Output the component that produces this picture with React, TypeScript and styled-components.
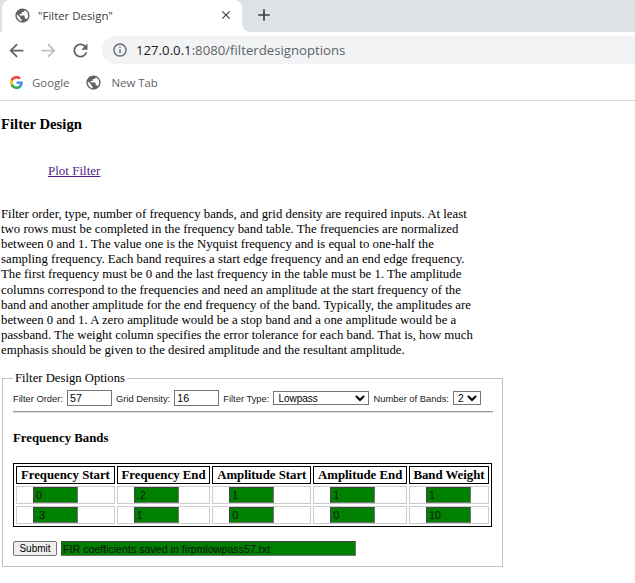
import React from 'react';
import styled, {createGlobalStyle} from 'styled-components';

const GLOBE =
  'M12 2C6.48 2 2 6.48 2 12s4.48 10 10 10 10-4.48 10-10S17.52 2 12 2zm-1 17.93c-3.95-.49-7-3.85-7-7.93 0-.62.08-1.21.21-1.79L9 15v1c0 1.1.9 2 2 2v1.93zm6.9-2.54c-.26-.81-1-1.39-1.9-1.39h-1v-3c0-.55-.45-1-1-1H8v-2h2c.55 0 1-.45 1-1V7h2c1.1 0 2-.9 2-2v-.41c2.93 1.19 5 4.06 5 7.41 0 2.08-.8 3.97-2.1 5.39z';

const GlobalStyle = createGlobalStyle`
  html, body {
    margin: 0;
    padding: 0;
    background: #fff;
  }
  body {
    width: 635px;
    height: 583px;
    overflow: hidden;
  }
`;

const TabStrip = styled.div`
  height: 32px;
  background: #dee1e6;
  display: flex;
  align-items: flex-end;
  padding-left: 2px;
`;

const Tab = styled.div`
  position: relative;
  width: 240px;
  height: 32px;
  background: #fff;
  border-radius: 8px 8px 0 0;
  display: flex;
  align-items: center;
  padding: 0 9px 2px 12px;
  box-sizing: border-box;
  font: 11.4px 'Open Sans', sans-serif;
  color: #3c4043;

  &::after {
    content: '';
    position: absolute;
    right: -8px;
    bottom: 0;
    width: 8px;
    height: 8px;
    background: radial-gradient(circle at 100% 0, transparent 7.5px, #fff 8px);
  }
`;

const TabTitle = styled.span`
  margin-left: 7px;
  flex: 1;
`;

const NewTab = styled.div`
  width: 20px;
  height: 32px;
  margin-left: 12px;
  display: flex;
  align-items: center;
  justify-content: center;
  padding-bottom: 2px;
  box-sizing: border-box;
`;

const Toolbar = styled.div`
  height: 36px;
  display: flex;
  align-items: center;
`;

const NavButton = styled.div`
  width: 16px;
  height: 16px;
  margin-left: 8px;
  margin-right: 8px;
  display: flex;
  align-items: center;
  justify-content: center;
`;

const NavGroup = styled.div`
  display: flex;
  width: 102px;
`;

const Omnibox = styled.div`
  flex: 1;
  height: 28px;
  background: #f1f3f4;
  border-radius: 14px 0 0 14px;
  display: flex;
  align-items: center;
  padding-left: 10px;
  font: 13.2px 'Open Sans', sans-serif;
  color: #5f6368;
`;

const Host = styled.span`
  color: #202124;
`;

const Url = styled.span`
  margin-left: 8px;
`;

const BookmarkBar = styled.div`
  height: 33px;
  box-sizing: border-box;
  border-bottom: 1px solid #dadce0;
  display: flex;
  align-items: center;
  padding: 0 0 4px 10px;
  gap: 16px;
  font: 11.4px 'Open Sans', sans-serif;
  color: #5f6368;
`;

const Bookmark = styled.div`
  display: flex;
  align-items: center;
  gap: 9px;
`;

const Page = styled.div`
  padding: 0 1px;
  font: 12.8px/15.1px 'Liberation Serif', serif;
  color: #000;
`;

const Heading = styled.h3`
  margin: 15px 0 0;
  font-size: 14.7px;
  line-height: 17px;
  font-weight: bold;
`;

const PlotLink = styled.a`
  display: block;
  margin: 30px 0 0 47px;
  font-size: 13px;
  color: #551a8b;
  text-decoration: underline;
`;

const Intro = styled.p`
  margin: 29px 0 0;
  width: 474px;
`;

const Options = styled.fieldset`
  margin: 13px 0 0 1px;
  width: 501px;
  min-width: 0;
  height: 196px;
  padding: 0 10px;
  box-sizing: border-box;
  border: 1px solid #c0c0c0;
`;

const OptionsLegend = styled.legend`
  padding: 0 2px;
  margin-left: 0;
  font-size: 12.7px;
`;

const OptionRow = styled.div`
  display: flex;
  align-items: center;
  height: 20px;
  margin-top: 2px;
  font: 9.4px 'Liberation Sans', sans-serif;
  color: #222;
`;

const OptionLabel = styled.label<{$after?: boolean}>`
  white-space: nowrap;
  margin-right: 4px;
  margin-left: ${p => (p.$after ? 4 : 0)}px;
`;

const TextBox = styled.input<{$wide?: boolean}>`
  flex: none;
  width: ${p => (p.$wide ? 295 : 45)}px;
  height: ${p => (p.$wide ? 15 : 16)}px;
  box-sizing: border-box;
  padding: 0 ${p => (p.$wide ? 1 : 2)}px;
  margin: 0;
  border: 1px solid #767676;
  font: 10.67px 'Liberation Sans', sans-serif;
  color: #000;
  background: #fff;
  outline: none;
`;

const GreenBox = styled(TextBox)`
  background: #008000;
  color: #111;
  border-color: #444 #767676 #767676 #444;
`;

const Dropdown = styled.select<{$width: number}>`
  flex: none;
  width: ${p => p.$width}px;
  height: 14px;
  box-sizing: border-box;
  margin: 0 4px 0 0;
  padding: 0;
  border: 1px solid #767676;
  border-radius: 0;
  background: #fff;
  font: 10px 'Liberation Sans', sans-serif;
  color: #000;
`;

const Rule = styled.hr`
  margin: 3px 0 0;
  width: 480px;
  height: 2px;
  box-sizing: border-box;
  border: 0;
  border-top: 1px solid #999;
  border-bottom: 1px solid #ddd;
`;

const SectionTitle = styled.h4`
  margin: 18px 0 0;
  font-size: 12.8px;
  line-height: 15px;
  font-weight: bold;
`;

const Bands = styled.table`
  margin-top: 17px;
  width: 479px;
  border: 1px solid #000;
  border-spacing: 2px;
  border-collapse: separate;
`;

const HeadCell = styled.th`
  border: 1px solid #000;
  padding: 1px 1px 0;
  font-size: 12.8px;
  line-height: 15px;
  font-weight: bold;
  white-space: nowrap;
`;

const BandCell = styled.td`
  border: 1px solid #ccc;
  padding: 0 1px 0 16px;
  line-height: 0;
`;

const SubmitRow = styled.div`
  display: flex;
  align-items: center;
  gap: 4px;
  margin-top: 14px;
`;

const SubmitButton = styled.button`
  width: 44px;
  height: 15px;
  box-sizing: border-box;
  padding: 0;
  margin: 0;
  border: 1px solid #767676;
  border-radius: 2px;
  background: #efefef;
  font: 10px 'Liberation Sans', sans-serif;
  color: #000;
`;

const Icon = ({d, color, size = 16}: {d: string; color: string; size?: number}) => (
  <svg width={size} height={size} viewBox="0 0 24 24" style={{flex: 'none'}}>
    <path d={d} fill={color} />
  </svg>
);

const GoogleMark = () => (
  <svg width="13" height="13" viewBox="0 0 48 48">
    <path fill="#EA4335" d="M24 9.5c3.54 0 6.71 1.22 9.21 3.6l6.85-6.85C35.9 2.38 30.47 0 24 0 14.62 0 6.51 5.38 2.56 13.22l7.98 6.19C12.43 13.72 17.74 9.5 24 9.5z" />
    <path fill="#4285F4" d="M46.98 24.55c0-1.57-.15-3.09-.38-4.55H24v9.02h12.94c-.58 2.96-2.26 5.48-4.78 7.18l7.73 6c4.51-4.18 7.09-10.36 7.09-17.65z" />
    <path fill="#FBBC05" d="M10.53 28.59c-.48-1.45-.76-2.99-.76-4.59s.27-3.14.76-4.59l-7.98-6.19C.92 16.46 0 20.12 0 24c0 3.88.92 7.54 2.56 10.78l7.97-6.19z" />
    <path fill="#34A853" d="M24 48c6.48 0 11.93-2.13 15.89-5.81l-7.73-6c-2.15 1.45-4.92 2.3-8.16 2.3-6.26 0-11.57-4.22-13.47-9.91l-7.98 6.19C6.51 42.62 14.62 48 24 48z" />
  </svg>
);

const bands = [
  ['0', '.2', '1', '1', '1'],
  ['.3', '1', '0', '0', '10'],
];

const columns = ['Frequency Start', 'Frequency End', 'Amplitude Start', 'Amplitude End', 'Band Weight'];

export default function App() {
  return (
    <>
      <GlobalStyle />
      <TabStrip>
        <Tab>
          <Icon d={GLOBE} color="#5f6368" size={17} />
          <TabTitle>"Filter Design"</TabTitle>
          <Icon
            d="M19 6.41 17.59 5 12 10.59 6.41 5 5 6.41 10.59 12 5 17.59 6.41 19 12 13.41 17.59 19 19 17.59 13.41 12z"
            color="#3c4043"
            size={14}
          />
        </Tab>
        <NewTab>
          <Icon d="M19 13h-6v6h-2v-6H5v-2h6V5h2v6h6v2z" color="#3c4043" size={20} />
        </NewTab>
      </TabStrip>
      <Toolbar>
        <NavGroup>
          <NavButton>
            <Icon d="M20 11H7.83l5.59-5.59L12 4l-8 8 8 8 1.41-1.41L7.83 13H20v-2z" color="#5f6368" size={21} />
          </NavButton>
          <NavButton>
            <Icon d="M12 4l-1.41 1.41L16.17 11H4v2h12.17l-5.58 5.59L12 20l8-8z" color="#bdc1c6" size={21} />
          </NavButton>
          <NavButton>
            <Icon
              d="M17.65 6.35C16.2 4.9 14.21 4 12 4c-4.42 0-7.99 3.58-7.99 8s3.57 8 7.99 8c3.73 0 6.84-2.55 7.73-6h-2.08c-.82 2.33-3.04 4-5.65 4-3.31 0-6-2.69-6-6s2.69-6 6-6c1.66 0 3.14.69 4.22 1.78L13 11h7V4l-2.35 2.35z"
              color="#5f6368"
              size={21}
            />
          </NavButton>
        </NavGroup>
        <Omnibox>
          <Icon
            d="M11 7h2v2h-2zm0 4h2v6h-2zm1-9C6.48 2 2 6.48 2 12s4.48 10 10 10 10-4.48 10-10S17.52 2 12 2zm0 18c-4.41 0-8-3.59-8-8s3.59-8 8-8 8 3.59 8 8-3.59 8-8 8z"
            color="#5f6368"
          />
          <Url>
            <Host>127.0.0.1</Host>:8080/filterdesignoptions
          </Url>
        </Omnibox>
      </Toolbar>
      <BookmarkBar>
        <Bookmark>
          <GoogleMark />
          Google
        </Bookmark>
        <Bookmark>
          <Icon d={GLOBE} color="#5f6368" size={17} />
          New Tab
        </Bookmark>
      </BookmarkBar>
      <Page>
        <Heading>Filter Design</Heading>
        <PlotLink href="#plot">Plot Filter</PlotLink>
        <Intro>
          Filter order, type, number of frequency bands, and grid density are required inputs. At least two rows must
          be completed in the frequency band table. The frequencies are normalized between 0 and 1. The value one is
          the Nyquist frequency and is equal to one-half the sampling frequency. Each band requires a start edge
          frequency and an end edge frequency. The first frequency must be 0 and the last frequency in the table must
          be 1. The amplitude columns correspond to the frequencies and need an amplitude at the start frequency of
          the band and another amplitude for the end frequency of the band. Typically, the amplitudes are between 0
          and 1. A zero amplitude would be a stop band and a one amplitude would be a passband. The weight column
          specifies the error tolerance for each band. That is, how much emphasis should be given to the desired
          amplitude and the resultant amplitude.
        </Intro>
        <Options>
          <OptionsLegend>Filter Design Options</OptionsLegend>
          <OptionRow>
            <OptionLabel>Filter Order:</OptionLabel>
            <TextBox defaultValue="57" />
            <OptionLabel $after>Grid Density:</OptionLabel>
            <TextBox defaultValue="16" />
            <OptionLabel $after>Filter Type:</OptionLabel>
            <Dropdown $width={96} defaultValue="Lowpass">
              <option>Lowpass</option>
              <option>Highpass</option>
            </Dropdown>
            <OptionLabel>Number of Bands:</OptionLabel>
            <Dropdown $width={28} defaultValue="2">
              <option>2</option>
              <option>3</option>
            </Dropdown>
          </OptionRow>
          <Rule />
          <SectionTitle>Frequency Bands</SectionTitle>
          <Bands>
            <thead>
              <tr>
                {columns.map(c => (
                  <HeadCell key={c}>{c}</HeadCell>
                ))}
              </tr>
            </thead>
            <tbody>
              {bands.map((row, i) => (
                <tr key={i}>
                  {row.map((v, j) => (
                    <BandCell key={j}>
                      <GreenBox defaultValue={v} />
                    </BandCell>
                  ))}
                </tr>
              ))}
            </tbody>
          </Bands>
          <SubmitRow>
            <SubmitButton type="button">Submit</SubmitButton>
            <GreenBox $wide defaultValue="FIR coefficients saved in firpmlowpass57.txt" />
          </SubmitRow>
        </Options>
      </Page>
    </>
  );
}
